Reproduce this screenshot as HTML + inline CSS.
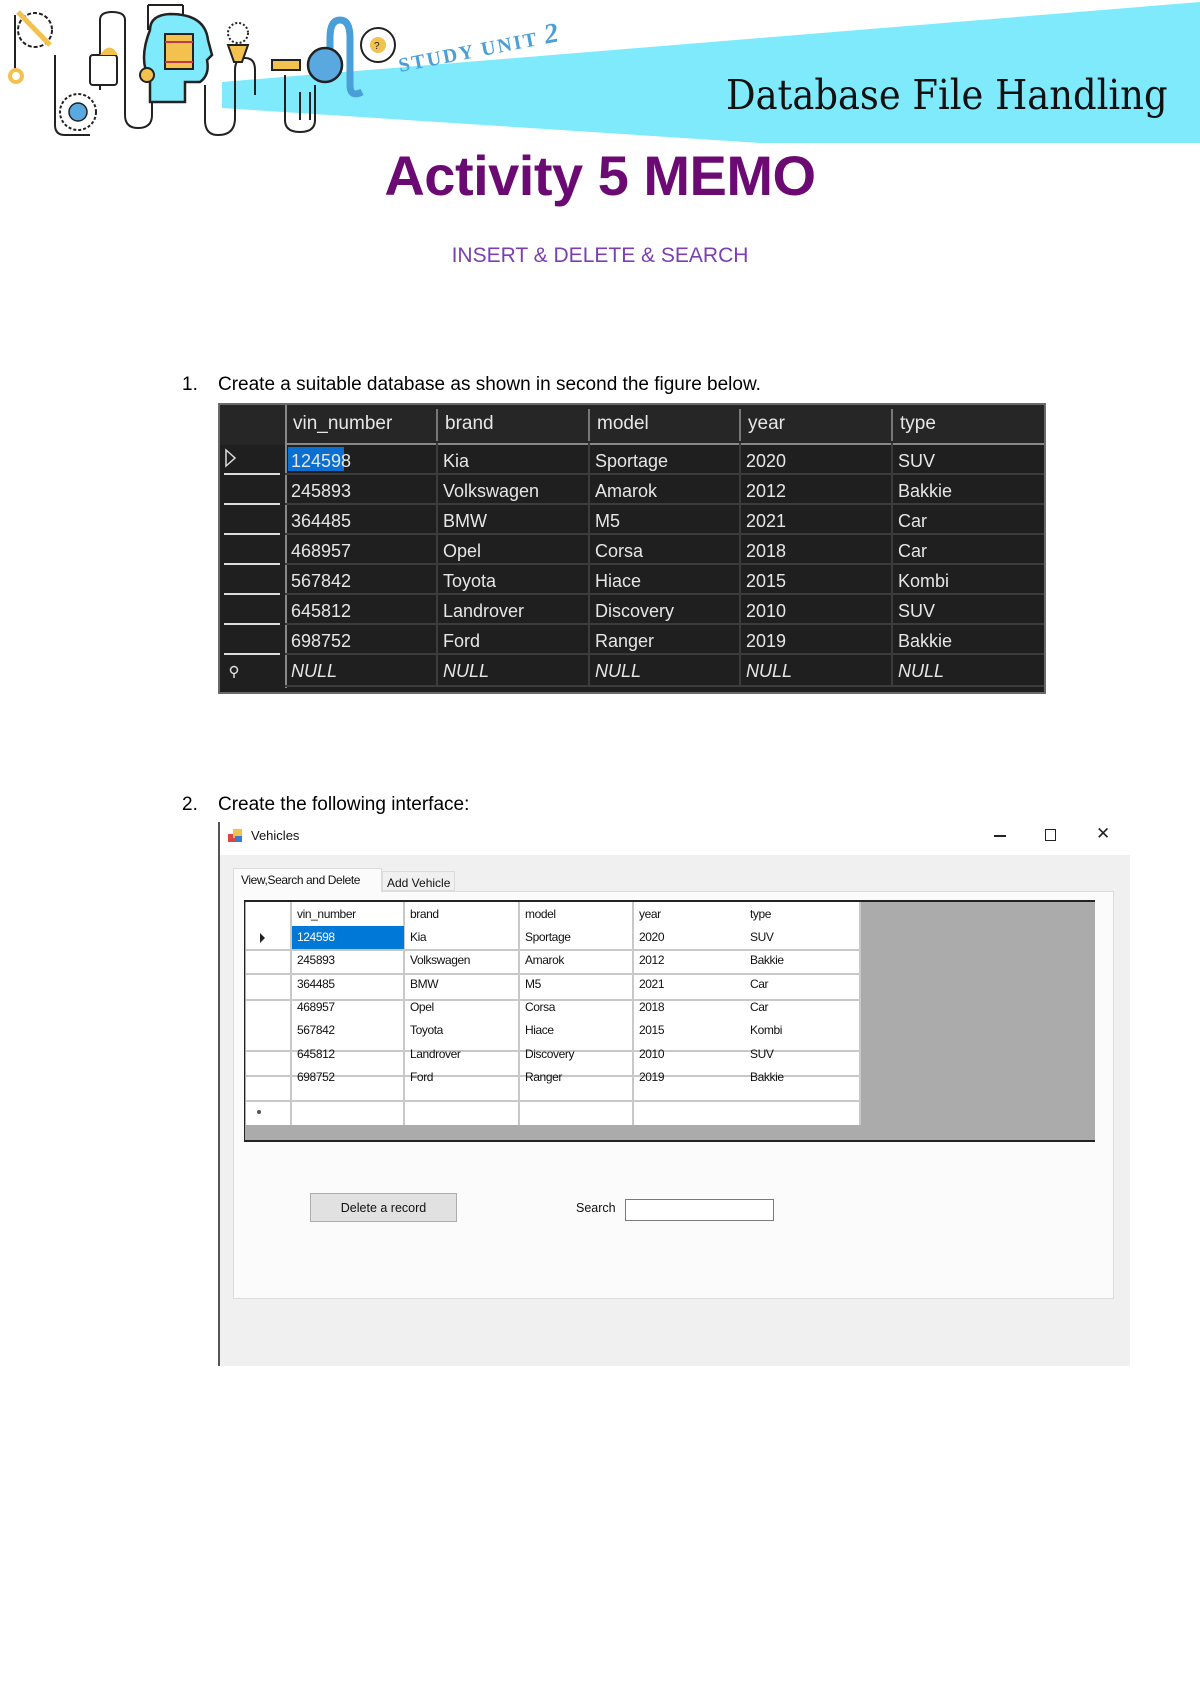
<!DOCTYPE html>
<html><head><meta charset="utf-8">
<style>
*{margin:0;padding:0;box-sizing:border-box}
html,body{width:1200px;height:1696px;background:#fff;overflow:hidden;position:relative;font-family:"Liberation Sans",sans-serif}
.abs{position:absolute}
.dt{position:absolute;left:218px;top:403px;width:828px;height:291px;background:#1f1f1f;border:2px solid #6a6a6a}
.dt .c{position:absolute;color:#e6e6e6;font-size:19px;font-family:"Liberation Sans",sans-serif;white-space:nowrap}
.wg .c{position:absolute;font-size:12px;color:#111;white-space:nowrap;font-family:"Liberation Sans",sans-serif;letter-spacing:-0.4px}
</style></head><body>

<svg class="abs" style="left:0;top:0" width="1200" height="150">
<polygon points="222,82 1200,2 1200,143 760,143 222,108" fill="#7eeafc"/>
<g fill="none" stroke="#222" stroke-width="2">
<path d="M15,15 L15,75"/>
<circle cx="35" cy="30" r="17" stroke-dasharray="4 2"/>
<path d="M55,55 L55,125 Q55,135 65,135 L90,135"/>
<circle cx="78" cy="112" r="18" stroke-dasharray="3 2"/>
<path d="M100,90 L100,20 Q100,12 112,12 Q125,12 125,20 L125,115 Q125,128 138,128 Q152,128 152,115 L152,30"/>
<rect x="90" y="55" width="27" height="30" rx="3" fill="#fff"/>
<path d="M148,5 L148,30 M183,5 L183,30 M148,5 L183,5"/>
<path d="M205,85 L205,120 Q205,135 218,135 Q235,135 235,118 L235,70 Q235,58 245,58 Q255,58 255,70 L255,95"/>
<path d="M285,75 L285,120 Q285,132 300,132 Q315,132 315,120 L315,85"/>
<rect x="272" y="60" width="28" height="10" fill="#f2c14e"/>
<path d="M300,92 L300,120 M310,92 L310,120"/>
</g>
<path d="M150,30 Q150,15 170,14 Q205,14 208,40 L212,55 L207,60 Q210,75 200,82 L185,82 L185,102 L150,102 L150,80 Q138,60 150,30 Z" fill="#7eeafc" stroke="#222" stroke-width="2.5"/>
<rect x="165" y="34" width="28" height="35" fill="#f2c14e" stroke="#222" stroke-width="2"/>
<path d="M165,42 H193 M165,62 H193" stroke="#c0394b" stroke-width="2"/>
<path d="M228,45 L248,45 L242,62 L234,62 Z" fill="#f2c14e" stroke="#222" stroke-width="2"/>
<circle cx="238" cy="33" r="10" fill="none" stroke="#222" stroke-width="2" stroke-dasharray="2 2"/>
<path d="M100,55 Q110,40 118,55" fill="#f2c14e"/>
<circle cx="147" cy="75" r="7" fill="#f2c14e" stroke="#222" stroke-width="2"/>
<circle cx="16" cy="76" r="6" fill="#fff" stroke="#f2c14e" stroke-width="4"/>
<path d="M18,12 L50,45" stroke="#f2c14e" stroke-width="5"/>
<circle cx="78" cy="112" r="9" fill="#5aa8e0" stroke="#222" stroke-width="1.5"/>
<path d="M330,80 L330,38 Q330,20 340,20 Q350,20 350,38 L350,85 Q350,98 362,92" fill="none" stroke="#4a9fd8" stroke-width="7"/>
<circle cx="325" cy="65" r="17" fill="#5aa8e0" stroke="#222" stroke-width="2.5"/>
<circle cx="378" cy="45" r="17" fill="#fff" stroke="#222" stroke-width="2"/>
<circle cx="378" cy="45" r="8" fill="#f2c14e"/>
<text x="374" y="49" font-size="10" font-family="Liberation Sans" fill="#222">?</text>
<text transform="translate(400,72) rotate(-11)" font-family="Liberation Serif" font-weight="bold" font-size="20" letter-spacing="2" fill="#4a9fd8">STUDY UNIT <tspan font-size="28" font-style="italic">2</tspan></text>
<text x="726" y="109" font-family="DejaVu Serif Condensed, Liberation Serif, serif" font-size="41" fill="#111">Database File Handling</text>
</svg>

<div class="abs" style="left:0;width:1200px;top:143px;text-align:center;font-weight:bold;font-size:56px;color:#6b0a73;letter-spacing:-0.5px">Activity 5 MEMO</div>
<div class="abs" style="left:0;width:1200px;top:244px;text-align:center;font-size:21px;color:#7a3fb0">INSERT &amp; DELETE &amp; SEARCH</div>

<div class="abs" style="left:182px;top:374px;font-size:19px;color:#000">1.</div>
<div class="abs" style="left:218px;top:374px;font-size:19px;color:#000">Create a suitable database as shown in second the figure below.</div>

<div class="dt">
 <div class="abs" style="left:0;top:0;width:67px;height:40px;border-right:2px solid #888;background:#262626"></div>
 <div class="abs" style="left:67px;top:0;right:0;height:40px;border-bottom:2px solid #888;background:#262626"></div>
 <div class="abs" style="left:0;top:40px;width:67px;bottom:4px;border-right:2px solid #888"></div>
</div>
<svg class="abs" style="left:218px;top:403px" width="828" height="291">
<g stroke="#777" stroke-width="2"><line x1="219" y1="6" x2="219" y2="38"/><line x1="371" y1="6" x2="371" y2="38"/><line x1="522" y1="6" x2="522" y2="38"/><line x1="674" y1="6" x2="674" y2="38"/></g>
<g stroke="#3c3c3c" stroke-width="2">
<line x1="67" y1="71" x2="826" y2="71"/><line x1="67" y1="101" x2="826" y2="101"/><line x1="67" y1="131" x2="826" y2="131"/><line x1="67" y1="161" x2="826" y2="161"/><line x1="67" y1="191" x2="826" y2="191"/><line x1="67" y1="221" x2="826" y2="221"/><line x1="67" y1="251" x2="826" y2="251"/><line x1="67" y1="283" x2="826" y2="283"/>
<line x1="219" y1="40" x2="219" y2="283"/><line x1="371" y1="40" x2="371" y2="283"/><line x1="522" y1="40" x2="522" y2="283"/><line x1="674" y1="40" x2="674" y2="283"/>
</g>
<g stroke="#ddd" stroke-width="2"><line x1="6" y1="71" x2="62" y2="71"/><line x1="6" y1="101" x2="62" y2="101"/><line x1="6" y1="131" x2="62" y2="131"/><line x1="6" y1="161" x2="62" y2="161"/><line x1="6" y1="191" x2="62" y2="191"/><line x1="6" y1="221" x2="62" y2="221"/><line x1="6" y1="251" x2="62" y2="251"/></g>
<path d="M8,47 L17,55 L8,63 Z" fill="none" stroke="#ddd" stroke-width="1.5"/>
<circle cx="16" cy="267" r="3.5" fill="none" stroke="#ddd" stroke-width="1.5"/>
<path d="M16,270 L16,275" stroke="#ddd" stroke-width="1.5"/>
<rect x="70" y="44" width="56" height="24" fill="#0a6fd0"/>
</svg>
<div class="dt" style="background:transparent;border-color:transparent">
<div class="c" style="left:73px;top:8px">vin_number</div>
<div class="c" style="left:225px;top:8px">brand</div>
<div class="c" style="left:377px;top:8px">model</div>
<div class="c" style="left:528px;top:8px">year</div>
<div class="c" style="left:680px;top:8px">type</div>
</div>
<div class="abs" id="dtrows" style="left:220px;top:405px"></div>

<div class="abs" style="left:182px;top:794px;font-size:19px;color:#000">2.</div>
<div class="abs" style="left:218px;top:794px;font-size:19px;color:#000">Create the following interface:</div>

<div class="abs" style="left:218px;top:822px;width:2px;height:544px;background:#555"></div>
<div class="abs" style="left:228px;top:827px;width:16px;height:16px">
 <div class="abs" style="left:0;top:7px;width:8px;height:8px;background:#d44"></div>
 <div class="abs" style="left:5px;top:2px;width:9px;height:9px;background:#f2c14e"></div>
 <div class="abs" style="left:7px;top:9px;width:7px;height:6px;background:#3a7bd5"></div>
</div>
<div class="abs" style="left:251px;top:828px;font-size:13px;color:#111">Vehicles</div>
<div class="abs" style="left:994px;top:835px;width:12px;height:1.5px;background:#222"></div>
<div class="abs" style="left:1045px;top:829px;width:11px;height:12px;border:1.5px solid #222"></div>
<div class="abs" style="left:1096px;top:824px;font-size:17px;color:#222">✕</div>
<div class="abs" style="left:220px;top:855px;width:910px;height:511px;background:#f0f0f0"></div>
<div class="abs" style="left:233px;top:891px;width:881px;height:408px;background:#fbfbfb;border:1px solid #dcdcdc"></div>
<div class="abs" style="left:233px;top:868px;width:149px;height:24px;background:#fbfbfb;border:1px solid #dcdcdc;border-bottom:none;font-size:12px;padding:4px 0 0 7px;color:#111;letter-spacing:-0.4px">View,Search and Delete</div>
<div class="abs" style="left:382px;top:871px;width:73px;height:20px;background:#f0f0f0;border:1px solid #dcdcdc;font-size:12px;padding:4px 0 0 4px;color:#111">Add Vehicle</div>

<div class="abs" style="left:244px;top:900px;width:851px;height:242px;background:#ababab;border:2px solid #222;border-left-width:1px;border-right-width:0"></div>
<div class="abs wg" style="left:246px;top:902px;width:615px;height:223px;background:#fff">
 <svg class="abs" style="left:0;top:0" width="615" height="223">
  <g stroke="#c8c8c8" stroke-width="2">
   <line x1="0" y1="48" x2="615" y2="48"/><line x1="0" y1="72" x2="615" y2="72"/><line x1="0" y1="98" x2="615" y2="98"/><line x1="0" y1="149" x2="615" y2="149"/><line x1="0" y1="174" x2="615" y2="174"/><line x1="0" y1="199" x2="615" y2="199"/>
   <line x1="45" y1="0" x2="45" y2="223"/><line x1="158" y1="0" x2="158" y2="223"/><line x1="273" y1="0" x2="273" y2="223"/><line x1="387" y1="0" x2="387" y2="223"/><line x1="614" y1="0" x2="614" y2="223"/>
  </g>
  <rect x="46" y="24" width="112" height="23" fill="#0078d7"/>
  <path d="M14,31 L19,36 L14,41 Z" fill="#222"/>
  <circle cx="13" cy="210" r="2" fill="#555"/>
 </svg>
 <div class="c" style="left:51px;top:5px">vin_number</div><div class="c" style="left:164px;top:5px">brand</div><div class="c" style="left:279px;top:5px">model</div><div class="c" style="left:393px;top:5px">year</div><div class="c" style="left:504px;top:5px">type</div>
</div>
<div class="abs" id="wgrows" style="left:246px;top:902px"></div>

<div class="abs" style="left:310px;top:1193px;width:147px;height:29px;background:#e1e1e1;border:1px solid #adadad;font-size:12.5px;text-align:center;padding-top:7px;color:#111">Delete a record</div>
<div class="abs" style="left:576px;top:1201px;font-size:12.5px;color:#111">Search</div>
<div class="abs" style="left:625px;top:1199px;width:149px;height:22px;background:#fff;border:1px solid #7a7a7a"></div>

<script>
var d=[["124598","Kia","Sportage","2020","SUV"],["245893","Volkswagen","Amarok","2012","Bakkie"],["364485","BMW","M5","2021","Car"],["468957","Opel","Corsa","2018","Car"],["567842","Toyota","Hiace","2015","Kombi"],["645812","Landrover","Discovery","2010","SUV"],["698752","Ford","Ranger","2019","Bakkie"]];
var xs=[71,223,375,526,678],h="";
for(var r=0;r<8;r++)for(var c=0;c<5;c++){var t=r<7?d[r][c]:"NULL";
h+='<div style="position:absolute;left:'+xs[c]+'px;top:'+(46+r*30)+'px;color:#e6e6e6;font-size:18px;white-space:nowrap;font-family:\'Liberation Sans\',sans-serif;'+(r==7?'font-style:italic;':'')+'">'+t+'</div>';}
document.getElementById('dtrows').innerHTML=h;
var wx=[51,164,279,393,504],g="";
for(var r=0;r<7;r++)for(var c=0;c<5;c++){
g+='<div style="position:absolute;left:'+wx[c]+'px;top:'+(28+r*23.3)+'px;font-size:12px;white-space:nowrap;font-family:\'Liberation Sans\',sans-serif;letter-spacing:-0.4px;color:'+(r==0&&c==0?'#fff':'#111')+'">'+d[r][c]+'</div>';}
document.getElementById('wgrows').innerHTML=g;
</script>
</body></html>
